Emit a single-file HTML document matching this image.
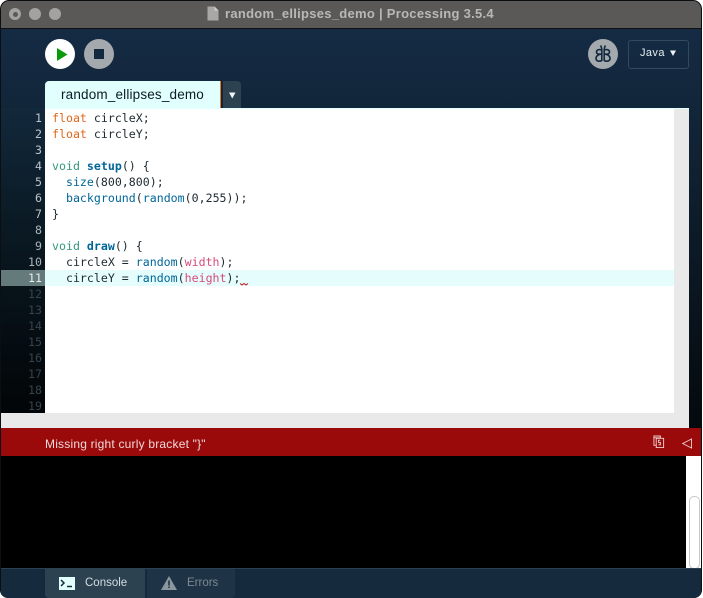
<!DOCTYPE html>
<html>
<head>
<meta charset="utf-8">
<style>
html,body{margin:0;padding:0;background:#fff}
#w{position:relative;width:703px;height:598px;overflow:hidden;background:#fff;font-family:"Liberation Sans",sans-serif}
#win{position:absolute;left:0;top:0;width:702px;height:598px;background:#0b0f12;border-radius:9px 9px 8px 8px;overflow:hidden}
.a{position:absolute}
#title{left:1px;top:1px;width:700px;height:27px;background:#5b5958;border-bottom:1px solid #111;border-radius:8px 8px 0 0}
.tl{width:12px;height:12px;border-radius:50%;background:#a3a2a1;top:8px}
#ttext{left:225px;top:6px;font-size:13px;font-weight:bold;color:#b9b8b7;white-space:nowrap;letter-spacing:.28px}
#head{left:1px;top:29px;width:700px;height:79px;background:linear-gradient(#152b44,#12263a)}
.ln{left:1px;width:41px;text-align:right;font:11.6px/16px "DejaVu Sans Mono",monospace;color:#a9b5bc}
.code{left:52px;font:11.6px/16px "DejaVu Sans Mono",monospace;color:#1e2a30;white-space:pre}
.k{color:#e2661a}.v{color:#33997e}.f{color:#006699}.b{color:#006699;font-weight:bold}.p{color:#d94a7a}
</style>
</head>
<body>
<div id="w">
<div id="win">
  <div class="a" id="title"></div>
  <div class="a tl" style="left:9px"></div>
  <div class="a" style="left:12.5px;top:11.5px;width:5px;height:5px;border-radius:50%;background:#5b5958"></div>
  <div class="a tl" style="left:29px"></div>
  <div class="a tl" style="left:49px"></div>
  <svg class="a" style="left:207px;top:6px" width="12" height="15" viewBox="0 0 12 15"><path d="M0.5 0.5H7.5L11.5 4.5V14.5H0.5Z" fill="#a9a8a7"/><path d="M7.5 0.5V4.5H11.5Z" fill="#d0cfce"/></svg>
  <div class="a" id="ttext">random_ellipses_demo | Processing 3.5.4</div>

  <div class="a" id="head"></div>
  <div class="a" style="left:45px;top:39px;width:30px;height:30px;border-radius:50%;background:#fff"></div>
  <svg class="a" style="left:57px;top:48px" width="11" height="13" viewBox="0 0 11 13"><path d="M0 0L10.5 6.5L0 13Z" fill="#0a9a0a"/></svg>
  <div class="a" style="left:84px;top:39px;width:30px;height:30px;border-radius:50%;background:#a4a9ae"></div>
  <div class="a" style="left:94px;top:49px;width:10px;height:10px;background:#13293f"></div>

  <div class="a" style="left:588px;top:39px;width:30px;height:30px;border-radius:50%;background:#a4a9ae"></div>
  <svg class="a" style="left:594px;top:44px" width="18" height="20" viewBox="0 0 18 20" fill="none" stroke="#13293f" stroke-width="1.6">
    <path d="M6.5 1.5C7.5 3 7.8 4 7.8 5.5V17"/><path d="M11.5 1.5C10.5 3 10.2 4 10.2 5.5V17"/>
    <path d="M7.8 6C4.5 5 2.5 6 2.5 8C2.5 10 4.5 10.5 7.8 10C4 10.5 2 12 2 14.5C2 17 5 18 7.8 16.5"/>
    <path d="M10.2 6C13.5 5 15.5 6 15.5 8C15.5 10 13.5 10.5 10.2 10C14 10.5 16 12 16 14.5C16 17 13 18 10.2 16.5"/>
  </svg>
  <div class="a" style="left:628px;top:40px;width:59px;height:27px;border:1px solid #34495c;border-radius:3px"></div>
  <div class="a" style="left:640px;top:46px;font-size:11px;line-height:14px;color:#e6ecef;letter-spacing:.4px">Java</div>
  <svg class="a" style="left:670px;top:50px" width="7" height="7"><path d="M0 .5H6L3 6Z" fill="#f0f3f5"/></svg>

  <div class="a" style="left:45px;top:81px;width:175px;height:27px;background:#e0fffd;border-radius:4px 0 0 0"></div>
  <div class="a" style="left:220px;top:81px;width:1px;height:27px;background:#e8761e"></div>
  <div class="a" style="left:61px;top:86px;font-size:13.5px;line-height:18px;color:#0d1a24;letter-spacing:.17px;white-space:nowrap">random_ellipses_demo</div>
  <div class="a" style="left:223px;top:81px;width:18px;height:27px;background:#2d4251;border-radius:0 4px 0 0"></div>
  <svg class="a" style="left:229px;top:92px" width="7" height="7"><path d="M0 .5H6.5L3.25 6.5Z" fill="#f2f5f7"/></svg>

  <!-- gutter -->
  <div class="a" style="left:1px;top:108px;width:44px;height:305px;background:linear-gradient(#12283b 0,#0a1923 40%,#020507 100%)"></div>
  <div class="a" style="left:45px;top:108px;width:629px;height:305px;background:#fff"></div>
  <div class="a" style="left:45px;top:270px;width:629px;height:16px;background:#e5fdfc"></div>
  <div class="a" style="left:1px;top:270px;width:44px;height:16px;background:#647a7b"></div>
  <div class="a" style="left:674px;top:108px;width:15px;height:305px;background:#e9e9e9"></div>
  <div class="a" style="left:45px;top:108px;width:644px;height:1px;background:#e0fffd"></div>
  <div class="a" style="left:1px;top:413px;width:688px;height:15px;background:#e9e9e9"></div>
  <div class="a" style="left:689px;top:108px;width:12px;height:320px;background:linear-gradient(#12263a,#04090d)"></div>

  <div class="a ln" style="top:110px;color:#b9c4ca">1</div>
  <div class="a ln" style="top:126px;color:#b9c4ca">2</div>
  <div class="a ln" style="top:142px;color:#b9c4ca">3</div>
  <div class="a ln" style="top:158px;color:#b9c4ca">4</div>
  <div class="a ln" style="top:174px;color:#b9c4ca">5</div>
  <div class="a ln" style="top:190px;color:#b9c4ca">6</div>
  <div class="a ln" style="top:206px;color:#b9c4ca">7</div>
  <div class="a ln" style="top:222px;color:#aab4ba">8</div>
  <div class="a ln" style="top:238px;color:#aab4ba">9</div>
  <div class="a ln" style="top:254px;color:#aab4ba">10</div>
  <div class="a ln" style="top:270px;color:#e4ecec">11</div>
  <div class="a ln" style="top:286px;color:#36444c">12</div>
  <div class="a ln" style="top:302px;color:#36444c">13</div>
  <div class="a ln" style="top:318px;color:#36444c">14</div>
  <div class="a ln" style="top:334px;color:#36444c">15</div>
  <div class="a ln" style="top:350px;color:#36444c">16</div>
  <div class="a ln" style="top:366px;color:#36444c">17</div>
  <div class="a ln" style="top:382px;color:#36444c">18</div>
  <div class="a ln" style="top:398px;color:#36444c">19</div>

  <div class="a code" style="top:110px"><span class="k">float</span> circleX;</div>
  <div class="a code" style="top:126px"><span class="k">float</span> circleY;</div>
  <div class="a code" style="top:158px"><span class="v">void</span> <span class="b">setup</span>() {</div>
  <div class="a code" style="top:174px">  <span class="f">size</span>(800,800);</div>
  <div class="a code" style="top:190px">  <span class="f">background</span>(<span class="f">random</span>(0,255));</div>
  <div class="a code" style="top:206px">}</div>
  <div class="a code" style="top:238px"><span class="v">void</span> <span class="b">draw</span>() {</div>
  <div class="a code" style="top:254px">  circleX = <span class="f">random</span>(<span class="p">width</span>);</div>
  <div class="a code" style="top:270px">  circleY = <span class="f">random</span>(<span class="p">height</span>);</div>
  <svg class="a" style="left:240px;top:283px" width="9" height="3"><path d="M0 .5L2 2L4 .5L6 2L8 .5" fill="none" stroke="#c41414" stroke-width="1"/></svg>

  <!-- status -->
  <div class="a" style="left:1px;top:428px;width:700px;height:28px;background:#9b0a0a"></div>
  <div class="a" style="left:45px;top:436px;font-size:12px;line-height:16px;color:#f0d9d9;white-space:nowrap;letter-spacing:.2px">Missing right curly bracket "}"</div>
  <svg class="a" style="left:653px;top:435px" width="12" height="14" viewBox="0 0 13 14" fill="none" stroke="#eecfcf" stroke-width="1"><path d="M1 .5H8V2.5H1ZM1 .5V10.5H3"/><path d="M3.5 3H11.5V13H3.5Z"/><path d="M8 5H6V7.5H8V10H6"/></svg>
  <svg class="a" style="left:682px;top:438px" width="10" height="11" viewBox="0 0 11 11" fill="none" stroke="#eecfcf" stroke-width="1"><path d="M10.5 .5V10.5L.8 5.5Z"/></svg>

  <!-- console -->
  <div class="a" style="left:1px;top:456px;width:700px;height:112px;background:#000"></div>
  <div class="a" style="left:686px;top:456px;width:15px;height:112px;background:#fff"></div>
  <div class="a" style="left:689px;top:496px;width:9px;height:71px;border:1px solid #c9c9c9;border-radius:5px;background:#fff"></div>

  <!-- footer -->
  <div class="a" style="left:1px;top:568px;width:700px;height:30px;background:#162a3d"></div>
  <div class="a" style="left:1px;top:568px;width:700px;height:1px;background:#2d4251"></div>
  <div class="a" style="left:45px;top:569px;width:100px;height:29px;background:#2d4251;border-radius:0 0 0 4px"></div>
  <div class="a" style="left:147px;top:569px;width:88px;height:29px;background:#1e3446;border-radius:0 0 4px 0"></div>
  <div class="a" style="left:59px;top:577px;width:16px;height:13px;background:#e0fffd"></div>
  <svg class="a" style="left:59px;top:577px" width="16" height="13"><path d="M2 3L5 6L2 9" fill="none" stroke="#17293b" stroke-width="1.5"/><path d="M8 9.5H13" stroke="#17293b" stroke-width="1.5"/></svg>
  <div class="a" style="left:85px;top:575px;font-size:11.5px;line-height:16px;color:#d3dde1">Console</div>
  <svg class="a" style="left:161px;top:576px" width="16" height="14" viewBox="0 0 16 14"><path d="M8 0L16 14H0Z" fill="#8b969d"/><path d="M7.2 4.5H8.8V9.5H7.2ZM7.2 10.5H8.8V12H7.2Z" fill="#1e3446"/></svg>
  <div class="a" style="left:187px;top:575px;font-size:11.5px;line-height:16px;color:#7d8a92">Errors</div>
</div>
</div>
</body>
</html>
